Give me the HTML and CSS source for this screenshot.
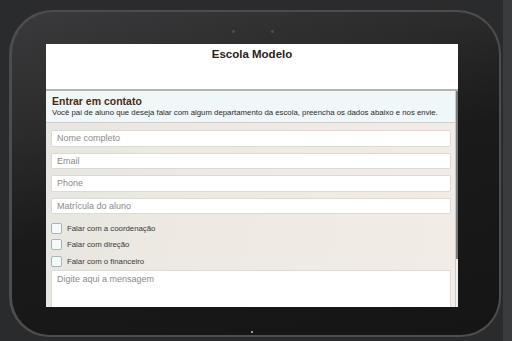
FILE: index.html
```html
<!DOCTYPE html>
<html lang="pt">
<head>
    <meta charset="UTF-8">
    <meta name="viewport" content="width=device-width, initial-scale=1.0">
    <title>Escola Modelo</title>
    <link rel="stylesheet" href="styles.css">
</head>
<body>
    <div class="stage">
        <div class="tablet">
            <span class="cam cam-left"></span>
            <span class="cam cam-right"></span>
            <span class="cam cam-bottom"></span>

            <div class="screen">
                <header class="app-header">
                    <h1>Escola Modelo</h1>
                </header>

                <div class="app-body">
                    <div class="content">
                        <div class="intro">
                            <h2>Entrar em contato</h2>
                            <p>Você pai de aluno que deseja falar com algum departamento da escola, preencha os dados abaixo e nos envie.</p>
                        </div>

                        <form class="contact-form">
                            <input type="text" class="field" placeholder="Nome completo">
                            <input type="text" class="field" placeholder="Email">
                            <input type="text" class="field" placeholder="Phone">
                            <input type="text" class="field" placeholder="Matrícula do aluno">

                            <label class="check"><span class="box"></span>Falar com a coordenação</label>
                            <label class="check"><span class="box"></span>Falar com direção</label>
                            <label class="check"><span class="box"></span>Falar com o financeiro</label>

                            <textarea class="field message" placeholder="Digite aqui a mensagem"></textarea>
                        </form>
                    </div>
                    <div class="scrollbar"><div class="thumb"></div></div>
                </div>
            </div>
        </div>
        <div class="side-strip"></div>
    </div>
</body>
</html>
```

FILE: styles.css
```css
* {
    margin: 0;
    padding: 0;
    box-sizing: border-box;
    font-family: 'Liberation Sans', Arial, sans-serif;
}

html, body {
    width: 512px;
    height: 341px;
    overflow: hidden;
}

body {
    background: #2a2b2d;
}

.stage {
    display: flex;
    height: 341px;
}

.tablet {
    position: relative;
    flex-shrink: 0;
    width: 492px;
    height: 327px;
    margin: 10px 0 0 9px;
    padding: 32px 0 0 34px;
    border: 2px solid #4d4d4f;
    border-left-width: 3px;
    border-radius: 44px 44px 40px 40px;
    background: linear-gradient(165deg, #3a3a3c 0%, #2b2b2c 28%, #1a1a1b 52%, #151515 100%);
    overflow: hidden;
}

.side-strip {
    flex: 1;
    margin-left: 2px;
    background: #3a3b3d;
}

.cam {
    position: absolute;
    width: 3px;
    height: 3px;
    border-radius: 50%;
    background: #4c4f55;
}

.cam-left { left: 220px; top: 18px; }
.cam-right { left: 259px; top: 18px; }
.cam-bottom { left: 239px; top: 319px; background: #c8c8c8; width: 2px; height: 2px; }

.screen {
    width: 412px;
    height: 263px;
    background: #fff;
    display: flex;
    flex-direction: column;
    overflow: hidden;
}

.app-header {
    flex-shrink: 0;
    height: 47px;
    padding-top: 4px;
    border-bottom: 2px solid #b3b3b3;
    text-align: center;
}

.app-header h1 {
    font-size: 11.5px;
    color: #2b2118;
}

.app-body {
    flex: 1;
    min-height: 0;
    display: flex;
    overflow: hidden;
    background: #e8e6e1;
}

.content {
    flex: 1;
    display: flex;
    flex-direction: column;
    border-right: 1px solid #c9c9c9;
}

.intro {
    flex-shrink: 0;
    background: #eff7f8;
    padding: 4px 6px 5px;
    border-bottom: 1px solid #cfcfcf;
}

.intro h2 {
    font-size: 10.5px;
    color: #4a2b12;
    margin-bottom: 1px;
}

.intro p {
    font-size: 7.8px;
    color: #2a2a2a;
}

.contact-form {
    flex-shrink: 0;
    display: flex;
    flex-direction: column;
    padding: 7px 4px 0 5px;
    background: linear-gradient(100deg, #e7e6e0 0%, #efe9e3 40%, #f2ebe6 100%);
}

.field {
    flex-shrink: 0;
    height: 16.5px;
    margin-bottom: 6px;
    padding: 0 5px;
    border: 1px solid #dcdad5;
    border-radius: 2px;
    background: #fff;
    font-size: 9px;
    color: #333;
}

.field::placeholder {
    color: #8a8a8a;
}

.check {
    display: flex;
    align-items: center;
    height: 16.5px;
    font-size: 7.8px;
    color: #3a3a3a;
}

.box {
    width: 11px;
    height: 11px;
    margin-right: 5px;
    border: 1px solid #9fb9b8;
    border-radius: 2px;
    background: #f7f9f8;
}

.message {
    height: 40px;
    padding-top: 3px;
    resize: none;
}

.scrollbar {
    width: 2px;
    background: #eeeeee;
}

.thumb {
    height: 168px;
    background: #7a7a7a;
}
```
